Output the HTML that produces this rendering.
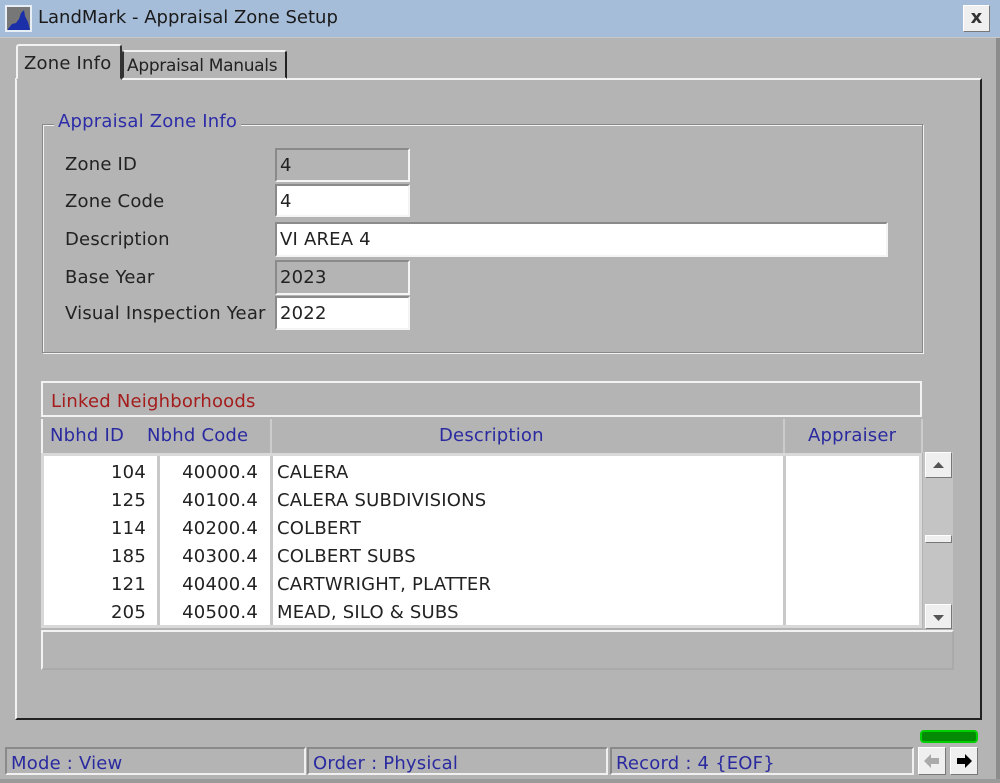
<!DOCTYPE html>
<html><head><meta charset="utf-8"><style>
*{box-sizing:border-box;margin:0;padding:0}
body{width:1000px;height:783px;background:#b4b4b4;font-family:"DejaVu Sans","Liberation Sans",sans-serif;font-size:18px;letter-spacing:0.2px;color:#222;position:relative;overflow:hidden}
.a{position:absolute}
.in{position:absolute;border:2px solid;border-color:#8a8a8a #f4f4f4 #f4f4f4 #8a8a8a;background:#fff;padding-left:3px;padding-top:2px;line-height:28px;white-space:nowrap}
.gray{background:#b4b4b4}
.lbl{position:absolute;left:65px;white-space:nowrap}
.cell{position:absolute;white-space:nowrap}
.stat{position:absolute;top:747px;height:28px;border:2px solid;border-color:#8a8a8a #f0f0f0 #f0f0f0 #8a8a8a;color:#2a2aa0;padding-left:4px;padding-top:3px;line-height:24px}
.btn{position:absolute;border:1px solid;border-color:#fff #777 #777 #fff;background:#efefef}
</style></head><body>
<div class="a" style="left:0;top:0;width:1000px;height:37px;background:#a5bdd9"></div>
<div class="a" style="left:0;top:37px;width:1000px;height:1px;background:#c8c8c8"></div>
<div class="a" style="left:5px;top:5px;width:27px;height:27px;border:2px solid #e8eef6;background:#777">
<svg width="23" height="23" style="position:absolute;left:0;top:0"><path d="M1 22 L5 17 L9 16 L12 12 L14 6 L17 3 L18 9 L21 15 L23 23 L1 23Z" fill="#1a2fa8"/></svg></div>
<div class="a" style="left:38px;top:7px;font-size:18px;letter-spacing:0;color:#1a1a1a">LandMark - Appraisal Zone Setup</div>
<div class="btn" style="left:963px;top:5px;width:27px;height:27px;text-align:center;line-height:24px;font-weight:bold;color:#333">x</div>
<div class="a" style="left:996px;top:38px;width:4px;height:745px;background:#8c8c8c"></div>
<div class="a" style="left:15px;top:78px;width:967px;height:642px;border:2px solid;border-color:#f2f2f2 #222 #222 #f2f2f2"></div>
<div class="a" style="left:16px;top:44px;width:106px;height:36px;border:2px solid;border-color:#f2f2f2 #333 transparent #f2f2f2;border-radius:3px 3px 0 0;background:#b4b4b4;padding:7px 0 0 6px">Zone Info</div>
<div class="a" style="left:122px;top:50px;width:165px;height:29px;border:2px solid;border-color:#f2f2f2 #222 transparent #333;border-radius:3px 3px 0 0;padding:4px 0 0 3px;font-size:17px;letter-spacing:-0.3px;white-space:nowrap;overflow:hidden">Appraisal Manuals</div>
<div class="a" style="left:42px;top:124px;width:881px;height:229px;border:1px solid #888;box-shadow:1px 1px 0 #f2f2f2 inset,1px 1px 0 #f2f2f2"></div>
<div class="a" style="left:54px;top:111px;background:#b4b4b4;color:#2c2ca8;padding:0 4px">Appraisal Zone Info</div>
<div class="lbl" style="top:154px">Zone ID</div>
<div class="lbl" style="top:191px">Zone Code</div>
<div class="lbl" style="top:229px">Description</div>
<div class="lbl" style="top:267px">Base Year</div>
<div class="lbl" style="top:303px">Visual Inspection Year</div>
<div class="in gray" style="left:275px;top:148px;width:135px;height:34px">4</div>
<div class="in" style="left:275px;top:184px;width:135px;height:33px">4</div>
<div class="in" style="left:275px;top:222px;width:613px;height:35px">VI AREA 4</div>
<div class="in gray" style="left:275px;top:260px;width:135px;height:35px">2023</div>
<div class="in" style="left:275px;top:296px;width:135px;height:34px">2022</div>
<div class="a" style="left:41px;top:381px;width:881px;height:36px;border:2px solid #f2f2f2;color:#a41c1c;padding:8px 0 0 8px">Linked Neighborhoods</div>
<div class="a" style="left:41px;top:419px;width:881px;height:34px;border-left:2px solid #f2f2f2;color:#2a2aa0">
<span class="cell" style="left:7px;top:6px">Nbhd ID</span><span class="cell" style="left:104px;top:6px">Nbhd Code</span><span class="cell" style="left:396px;top:6px">Description</span><span class="cell" style="left:765px;top:6px">Appraiser</span>
<div class="a" style="left:227px;top:0;width:2px;height:34px;background:#ccc"></div>
<div class="a" style="left:740px;top:0;width:2px;height:34px;background:#ccc"></div>
<div class="a" style="left:878px;top:0;width:2px;height:34px;background:#ccc"></div></div>
<div class="a" style="left:41px;top:453px;width:881px;height:175px;border:3px solid #d8d8d8;background:#fff;overflow:hidden">
<div class="a" style="left:113px;top:0;width:3px;height:169px;background:#c8c8c8"></div>
<div class="a" style="left:226px;top:0;width:3px;height:169px;background:#c8c8c8"></div>
<div class="a" style="left:739px;top:0;width:3px;height:169px;background:#c8c8c8"></div>
<div class="a" style="left:0;top:3px;width:102px;text-align:right;line-height:28px">104<br>125<br>114<br>185<br>121<br>205</div>
<div class="a" style="left:116px;top:3px;width:98px;text-align:right;line-height:28px">40000.4<br>40100.4<br>40200.4<br>40300.4<br>40400.4<br>40500.4</div>
<div class="a" style="left:233px;top:3px;line-height:28px;white-space:nowrap">CALERA<br>CALERA SUBDIVISIONS<br>COLBERT<br>COLBERT SUBS<br>CARTWRIGHT, PLATTER<br>MEAD, SILO &amp; SUBS</div>
</div>
<div class="a" style="left:923px;top:452px;width:30px;height:177px;background:#c4c4c4"></div>
<div class="btn" style="left:925px;top:452px;width:27px;height:26px"><svg width="25" height="24"><path d="M7 15 L18 15 L12.5 9Z" fill="#555"/></svg></div>
<div class="btn" style="left:925px;top:535px;width:27px;height:8px"></div>
<div class="btn" style="left:925px;top:604px;width:27px;height:25px"><svg width="25" height="24"><path d="M7 10 L18 10 L12.5 16Z" fill="#555"/></svg></div>
<div class="a" style="left:41px;top:630px;width:913px;height:40px;border:2px solid;border-color:#f2f2f2 #aaa #aaa #f2f2f2"></div>
<div class="a" style="left:920px;top:730px;width:58px;height:13px;background:#058a05;border:2px solid #00d000;border-radius:4px"></div>
<div class="stat" style="left:5px;width:301px">Mode : View</div>
<div class="stat" style="left:307px;width:301px">Order : Physical</div>
<div class="stat" style="left:610px;width:304px">Record : 4 {EOF}</div>
<div class="btn" style="left:918px;top:747px;width:28px;height:28px"><svg width="26" height="26"><path d="M5 13 L12 6 L12 10 L20 10 L20 16 L12 16 L12 20Z" fill="#aaa"/></svg></div>
<div class="btn" style="left:950px;top:747px;width:28px;height:28px"><svg width="26" height="26"><path d="M21 13 L14 6 L14 10 L6 10 L6 16 L14 16 L14 20Z" fill="#000"/></svg></div>
<div class="a" style="left:0;top:779px;width:1000px;height:4px;background:#9a9a9a"></div>
</body></html>
